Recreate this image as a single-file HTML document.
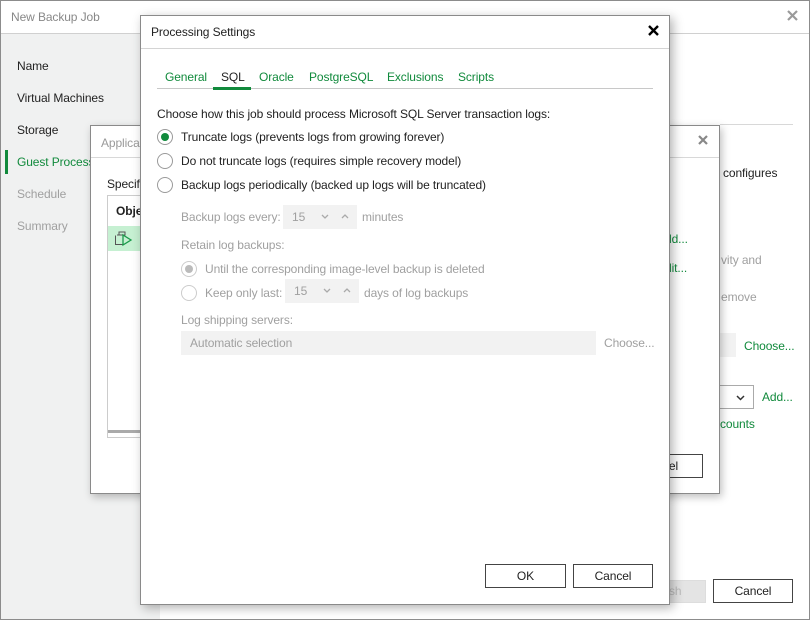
<!DOCTYPE html>
<html><head><style>
*{margin:0;padding:0;box-sizing:border-box}
body{width:810px;height:620px;position:relative;overflow:hidden;font-family:"Liberation Sans",sans-serif;font-size:12px;letter-spacing:-0.1px;color:#222;background:#fff}
.a{position:absolute;white-space:nowrap}
.g{color:#118a3c}
.gr{color:#a0a0a0}
.btn{position:absolute;border:1px solid #444;background:#fff;text-align:center;line-height:22px;font-size:12px}
.rad{position:absolute;width:16px;height:16px;border:1px solid #9a9a9a;border-radius:50%;background:#fff}
.spin{position:absolute;background:#f2f2f2;height:24px;color:#a0a0a0;line-height:24px;padding-left:9px}
.spin svg{position:absolute;top:9px}
</style></head><body>
<div class="a" style="left:0;top:0;width:810px;height:620px;border:1px solid #8c8c8c"></div>
<div class="a" style="top:33px;left:1px;width:808px;height:1px;background:#d0d0d0"></div>
<div class="a" style="left:11px;top:10px;color:#888">New Backup Job</div>
<svg class="a" style="left:787px;top:10px" width="11" height="11"><path d="M1 1L10 10M10 1L1 10" stroke="#9a9a9a" stroke-width="2.2"/></svg>
<div class="a" style="left:1px;top:34px;width:159px;height:585px;background:#f0f1f1"></div>
<div class="a" style="left:17px;top:59px">Name</div>
<div class="a" style="left:17px;top:91px">Virtual Machines</div>
<div class="a" style="left:17px;top:123px">Storage</div>
<div class="a" style="left:5px;top:150px;width:3px;height:24px;background:#118a3c"></div>
<div class="a g" style="left:17px;top:155px">Guest Processing</div>
<div class="a gr" style="left:17px;top:187px">Schedule</div>
<div class="a gr" style="left:17px;top:219px">Summary</div>
<div class="a" style="left:720px;top:124px;width:73px;height:1px;background:#d8d8d8"></div>
<div class="a" style="left:723px;top:166px">configures</div>
<div class="a gr" style="left:721px;top:253px">vity and</div>
<div class="a gr" style="left:721px;top:290px">emove</div>
<div class="a" style="left:720px;top:333px;width:16px;height:24px;background:#f2f2f2"></div>
<div class="a g" style="left:744px;top:339px">Choose...</div>
<div class="a" style="left:718px;top:385px;width:36px;height:24px;border:1px solid #aaa;border-left:none"><svg style="position:absolute;left:18px;top:9px" width="9" height="6"><path d="M1 1l3.5 3.5L8 1" fill="none" stroke="#333" stroke-width="1.5"/></svg></div>
<div class="a g" style="left:762px;top:390px">Add...</div>
<div class="a g" style="left:720px;top:417px">counts</div>
<div class="a" style="left:660px;top:580px;width:46px;height:23px;background:#e4e4e4;border:1px solid #ddd;color:#bbb;line-height:21px;padding-left:8px">sh</div>
<div class="btn" style="left:713px;top:579px;width:80px;height:24px">Cancel</div>
<!-- application dialog -->
<div class="a" style="left:90px;top:125px;width:630px;height:369px;background:#fff;border:1px solid #8a8a8a;box-shadow:2px 3px 8px rgba(0,0,0,.25)"></div>
<div class="a" style="left:91px;top:157px;width:628px;height:1px;background:#d8d8d8"></div>
<div class="a" style="left:101px;top:136px;color:#999">Applica</div>
<svg class="a" style="left:698px;top:135px" width="10" height="10"><path d="M1 1L9 9M9 1L1 9" stroke="#888" stroke-width="2.2"/></svg>
<div class="a" style="left:107px;top:177px">Specify</div>
<div class="a" style="left:107px;top:195px;width:40px;height:243px;border:1px solid #ccc"></div>
<div class="a" style="left:116px;top:204px;font-weight:bold">Obje</div>
<div class="a" style="left:108px;top:226px;width:34px;height:25px;background:#c6f0d2"></div>
<svg class="a" style="left:114px;top:230px" width="20" height="18"><path d="M3 5h8v-3h-6v3M1.5 5.5v9h7" fill="none" stroke="#555"/><path d="M9 5l8 5-8 5z" fill="none" stroke="#1a9a4a" stroke-width="1.3"/></svg>
<div class="a" style="left:108px;top:430px;width:34px;height:3px;background:#aaa"></div>
<div class="a g" style="left:665px;top:232px">dd...</div>
<div class="a g" style="left:665px;top:261px">dit...</div>
<div class="btn" style="left:660px;top:454px;width:43px;height:24px;border-left:none;text-align:left;padding-left:3px">cel</div>
<!-- processing settings -->
<div class="a" style="left:140px;top:15px;width:530px;height:590px;background:#fff;border:1px solid #8a8a8a;box-shadow:3px 3px 10px rgba(0,0,0,.3)"></div>
<div class="a" style="left:141px;top:48px;width:528px;height:1px;background:#d4d4d4"></div>
<div class="a" style="left:151px;top:25px">Processing Settings</div>
<svg class="a" style="left:648px;top:25px" width="11" height="11"><path d="M1 1L10 10M10 1L1 10" stroke="#000" stroke-width="2.4"/></svg>
<div class="a g" style="left:165px;top:70px">General</div>
<div class="a" style="left:221px;top:70px">SQL</div>
<div class="a g" style="left:259px;top:70px">Oracle</div>
<div class="a g" style="left:309px;top:70px">PostgreSQL</div>
<div class="a g" style="left:387px;top:70px">Exclusions</div>
<div class="a g" style="left:458px;top:70px">Scripts</div>
<div class="a" style="left:157px;top:88px;width:496px;height:1px;background:#c8c8c8"></div>
<div class="a" style="left:213px;top:87px;width:38px;height:3px;background:#118a3c"></div>
<div class="a" style="left:157px;top:107px">Choose how this job should process Microsoft SQL Server transaction logs:</div>
<div class="rad" style="left:157px;top:129px"></div><div class="a" style="left:161px;top:133px;width:8px;height:8px;border-radius:50%;background:#118a3c"></div>
<div class="a" style="left:181px;top:130px">Truncate logs (prevents logs from growing forever)</div>
<div class="rad" style="left:157px;top:153px"></div>
<div class="a" style="left:181px;top:154px">Do not truncate logs (requires simple recovery model)</div>
<div class="rad" style="left:157px;top:177px"></div>
<div class="a" style="left:181px;top:178px">Backup logs periodically (backed up logs will be truncated)</div>
<div class="a gr" style="left:181px;top:210px">Backup logs every:</div>
<div class="spin" style="left:283px;top:205px;width:74px">15<svg style="left:38px" width="8" height="5"><path d="M1 1l3 3 3-3" fill="none" stroke="#aaa" stroke-width="1.3"/></svg><svg style="left:58px" width="8" height="5"><path d="M1 4l3-3 3 3" fill="none" stroke="#aaa" stroke-width="1.3"/></svg></div>
<div class="a gr" style="left:362px;top:210px">minutes</div>
<div class="a gr" style="left:181px;top:238px">Retain log backups:</div>
<div class="rad" style="left:181px;top:261px;border-color:#ccc"></div><div class="a" style="left:185px;top:265px;width:8px;height:8px;border-radius:50%;background:#bbb"></div>
<div class="a gr" style="left:205px;top:262px">Until the corresponding image-level backup is deleted</div>
<div class="rad" style="left:181px;top:285px;border-color:#ccc"></div>
<div class="a gr" style="left:205px;top:286px">Keep only last:</div>
<div class="spin" style="left:285px;top:279px;width:74px">15<svg style="left:38px" width="8" height="5"><path d="M1 1l3 3 3-3" fill="none" stroke="#aaa" stroke-width="1.3"/></svg><svg style="left:58px" width="8" height="5"><path d="M1 4l3-3 3 3" fill="none" stroke="#aaa" stroke-width="1.3"/></svg></div>
<div class="a gr" style="left:364px;top:286px">days of log backups</div>
<div class="a gr" style="left:181px;top:313px">Log shipping servers:</div>
<div class="spin" style="left:181px;top:331px;width:415px">Automatic selection</div>
<div class="a gr" style="left:604px;top:336px">Choose...</div>
<div class="btn" style="left:485px;top:564px;width:81px;height:24px">OK</div>
<div class="btn" style="left:573px;top:564px;width:80px;height:24px">Cancel</div>
</body></html>
